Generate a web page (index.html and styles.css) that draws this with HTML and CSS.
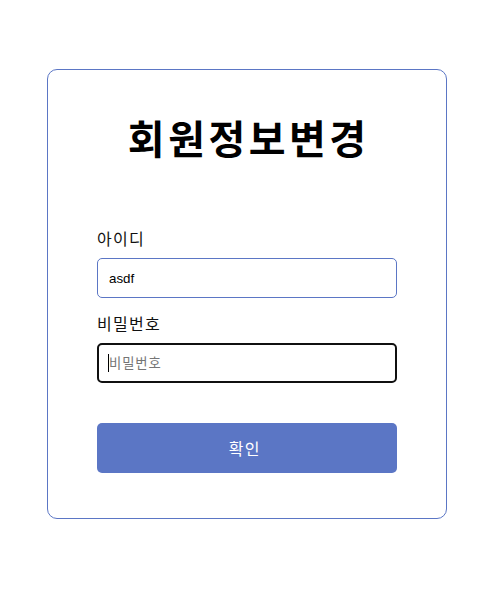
FILE: index.html
```html
<!DOCTYPE html>
<html lang="ko">
<head>
<meta charset="utf-8">
<title>회원정보변경</title>
<link rel="stylesheet" href="styles.css">
</head>
<body>
<main class="page">
  <form class="card">
    <h1 class="title">회원정보변경</h1>
    <label class="label" for="uid">아이디</label>
    <input class="field" id="uid" type="text" value="asdf">
    <label class="label label-second" for="upw">비밀번호</label>
    <div class="field-wrap">
      <input class="field field-focused" id="upw" type="password" placeholder="비밀번호">
      <span class="caret"></span>
    </div>
    <button class="submit" type="button">확인</button>
  </form>
</main>
</body>
</html>
```
FILE: styles.css
```css
* { box-sizing: border-box; }
html, body { margin: 0; padding: 0; background: #fff; }
body {
  font-family: "Noto Sans CJK KR", "Noto Sans", sans-serif;
  color: #000;
}
.page {
  display: flex;
  justify-content: center;
  padding: 69px 3px 0 0;
}
.card {
  width: 400px;
  height: 450px;
  border: 1px solid #5b76c5;
  border-radius: 10px;
  padding: 38px 49px 0;
  display: flex;
  flex-direction: column;
}
.title {
  margin: 0;
  font-size: 40px;
  line-height: 58px;
  font-weight: 700;
  text-align: center;
  letter-spacing: 3.5px;
  padding-left: 3.5px;
}
.label {
  margin-top: 60px;
  font-size: 16px;
  line-height: 24px;
  color: #111;
  letter-spacing: 1.3px;
}
.label-second { margin-top: 13px; }
.field {
  display: block;
  margin-top: 8px;
  width: 300px;
  height: 40px;
  border: 1px solid #5b76c5;
  border-radius: 5px;
  padding: 0 11px;
  font-family: "Liberation Sans", Arial, "Noto Sans CJK KR", sans-serif;
  font-size: 13.333px;
  color: #000;
  background: #fff;
  outline: none;
}
.field::placeholder {
  color: #757575;
  font-family: "Noto Sans CJK KR", sans-serif;
  letter-spacing: 0.9px;
}
.field-wrap { position: relative; margin-top: 8px; }
.field-wrap .field { margin-top: 0; }
.field-focused {
  border: 2px solid #101010;
  padding: 0 10px;
}
.caret {
  position: absolute;
  left: 11px;
  top: 11px;
  width: 1px;
  height: 18px;
  background: #000;
}
.submit {
  margin-top: 40px;
  width: 300px;
  height: 50px;
  border: none;
  border-radius: 5px;
  background: #5b76c5;
  color: #fff;
  font-family: "Noto Sans CJK KR", sans-serif;
  font-size: 16px;
  letter-spacing: 1.3px;
  padding-left: 1.3px;
}
```
